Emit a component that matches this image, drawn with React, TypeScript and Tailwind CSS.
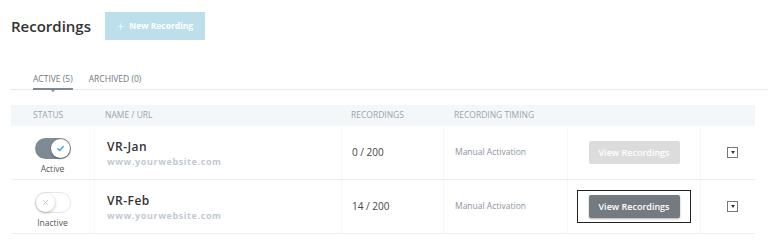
import React from "react";

const font = { fontFamily: '"Open Sans", "Liberation Sans", sans-serif' };

type Row = {
  active: boolean;
  name: string;
  url: string;
  count: string;
  focused?: boolean;
};

const rows: Row[] = [
  { active: true, name: "VR-Jan", url: "www.yourwebsite.com", count: "0 / 200" },
  {
    active: false,
    name: "VR-Feb",
    url: "www.yourwebsite.com",
    count: "14 / 200",
    focused: true,
  },
];

function Toggle({ on }: { on: boolean }) {
  if (on) {
    return (
      <div className="flex h-[21px] w-[36px] items-center justify-end rounded-full bg-[#7e8a94] pr-[1px]">
        <div className="flex h-[19px] w-[19px] items-center justify-center rounded-full bg-white shadow-[0_1px_2px_rgba(0,0,0,0.35)]">
          <svg width="9" height="9" viewBox="0 0 10 10">
            <path d="M2 5.2 L4.2 7.2 L8 2.8" fill="none" stroke="#3fa3dc" strokeWidth="1.6" strokeLinecap="round" strokeLinejoin="round" />
          </svg>
        </div>
      </div>
    );
  }
  return (
    <div className="flex h-[21px] w-[36px] items-center rounded-full border border-[#e3e6e9] bg-white">
      <div className="flex h-[19px] w-[19px] items-center justify-center rounded-full bg-white shadow-[0_1px_3px_rgba(0,0,0,0.3)]">
        <svg width="7" height="7" viewBox="0 0 8 8">
          <path d="M1.5 1.5 L6.5 6.5 M6.5 1.5 L1.5 6.5" stroke="#c9ced3" strokeWidth="1.1" strokeLinecap="round" />
        </svg>
      </div>
    </div>
  );
}

export default function App() {
  return (
    <div className="h-[244px] w-[768px] overflow-hidden bg-white" style={font}>
      <div className="flex items-center pl-[11px] pt-[12px]">
        <h1 className="w-[94px] text-[15px] font-semibold text-[#333] leading-[28px]">
          Recordings
        </h1>
        <button className="flex h-[28px] w-[100px] items-center justify-center gap-[5px] bg-[#bcdfeb] text-[8.5px] font-bold text-white">
          <span className="text-[13px] font-light leading-none">+</span>
          New Recording
        </button>
      </div>

      <div className="ml-[11px] mt-[33px] flex h-[17px] items-start border-b border-[#e8ebee] text-[8.5px] uppercase text-[#6f7880]">
        <div className="relative ml-[22px] h-[17px] border-b-2 border-[#7f8890]">
          ACTIVE (5)
          <span className="absolute left-1/2 top-[16px] h-0 w-0 -translate-x-1/2 border-x-[3px] border-t-[3px] border-x-transparent border-t-[#7f8890]" />
        </div>
        <div className="ml-[16px]">ARCHIVED (0)</div>
      </div>

      <div className="ml-[11px] mt-[15px] w-[744px]">
        <div className="flex h-[21px] items-center bg-[#f4f7f9] text-[8.5px] uppercase text-[#9aa3ab]">
          <div className="w-[83px] pl-[22px]">Status</div>
          <div className="w-[247px] pl-[11px]">Name / URL</div>
          <div className="w-[102px] pl-[10px]">Recordings</div>
          <div className="w-[124px] pl-[11px]">Recording Timing</div>
          <div className="flex-1" />
        </div>
        {rows.map((r) => (
          <div key={r.name} className="flex h-[54px] items-stretch border-b border-[#eceff1]">
            <div className="flex w-[83px] flex-col items-center justify-center pt-[8px]">
              <Toggle on={r.active} />
              <div className="mt-[4px] text-[8.5px] text-[#555]">
                {r.active ? "Active" : "Inactive"}
              </div>
            </div>
            <div className="flex w-[247px] flex-col justify-center border-l border-dotted border-[#f1f3f4] pl-[12px] pt-[2px]">
              <div className="text-[12px] font-semibold tracking-[0.5px] text-[#333] leading-[16px]">
                {r.name}
              </div>
              <div className="text-[9px] font-bold tracking-[0.6px] text-[#c3c9cf] leading-[13px]">
                {r.url}
              </div>
            </div>
            <div className="flex w-[102px] items-center border-l border-dotted border-[#f1f3f4] pl-[10px] text-[10px] text-[#444]">
              {r.count}
            </div>
            <div className="flex w-[124px] items-center border-l border-dotted border-[#f1f3f4] pl-[11px] text-[8.5px] text-[#8c959c]">
              Manual Activation
            </div>
            <div className="flex w-[133px] items-center justify-center border-l border-dotted border-[#f1f3f4]">
              <div
                className={
                  r.focused
                    ? "flex h-[33px] w-[114px] items-center justify-center border border-[#222]"
                    : "flex h-[33px] w-[114px] items-center justify-center border border-transparent"
                }
              >
                <button
                  className={
                    r.focused
                      ? "h-[23px] w-[91px] rounded-[2px] bg-[#737b81] text-[9px] font-semibold text-white shadow-[0_1px_2px_rgba(0,0,0,0.3)]"
                      : "h-[23px] w-[91px] rounded-[2px] bg-[#dcdcdc] text-[9px] font-semibold text-white"
                  }
                >
                  View Recordings
                </button>
              </div>
            </div>
            <div className="flex flex-1 items-center border-l border-dotted border-[#f1f3f4] pl-[26px]">
              <div className="flex h-[11px] w-[11px] items-center justify-center border border-[#777]">
                <span className="h-0 w-0 border-x-[2.5px] border-t-[3px] border-x-transparent border-t-[#333]" />
              </div>
            </div>
          </div>
        ))}
      </div>
    </div>
  );
}
